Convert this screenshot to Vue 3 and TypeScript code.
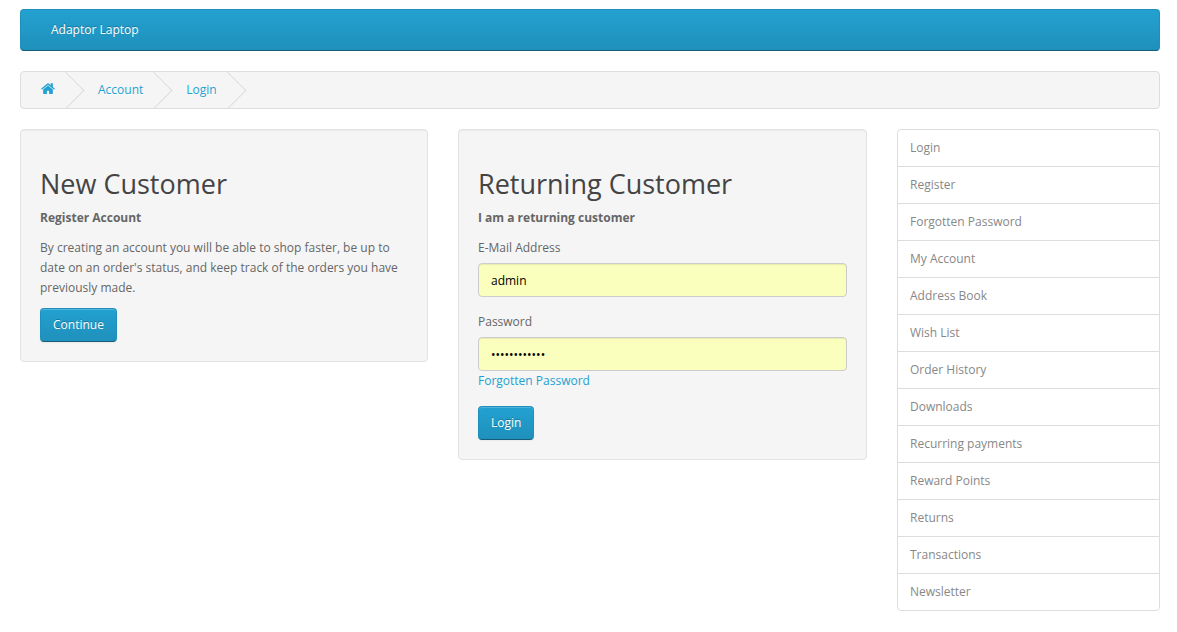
<script setup lang="ts">
import { ref } from 'vue'

const email = ref('admin')
const password = ref('admin1234567')
const links: string[] = [
  'Login', 'Register', 'Forgotten Password', 'My Account', 'Address Book',
  'Wish List', 'Order History', 'Downloads', 'Recurring payments',
  'Reward Points', 'Returns', 'Transactions', 'Newsletter',
]
</script>

<template>
  <div class="page">
    <nav class="menu" aria-label="Categories">
      <a href="#">Adaptor Laptop</a>
    </nav>

    <nav class="crumbs" aria-label="Breadcrumb">
      <a href="#" class="crumb home" aria-label="Home">
        <svg viewBox="0 0 1664 1312" width="14" height="11" aria-hidden="true">
          <path fill="currentColor" d="M1408 768v480q0 26-19 45t-45 19H960V928H704v384H320q-26 0-45-19t-19-45V768q0-1 .5-3t.5-3l575-474 575 474q1 2 1 6zm223-69l-62 74q-8 9-21 11h-3q-13 0-21-7L832 200 140 777q-12 8-24 7-13-2-21-11l-62-74q-8-10-7-23.500t11-21.500L756 55q32-26 76-26t76 26l244 204V64q0-14 9-23t23-9h192q14 0 23 9t9 23v408l219 182q10 8 11 21.500t-7 23.500z" />
        </svg>
      </a>
      <a href="#" class="crumb">Account</a>
      <a href="#" class="crumb">Login</a>
    </nav>

    <div class="row">
      <main class="content">
        <section class="well">
          <h2>New Customer</h2>
          <p><strong>Register Account</strong></p>
          <p>By creating an account you will be able to shop faster, be up to date on an order's status, and keep track of the orders you have previously made.</p>
          <button type="button" class="btn">Continue</button>
        </section>
        <section class="well">
          <h2>Returning Customer</h2>
          <p><strong>I am a returning customer</strong></p>
          <form @submit.prevent>
            <div class="group">
              <label for="email">E-Mail Address</label>
              <input id="email" v-model="email" type="text">
            </div>
            <div class="group">
              <label for="password">Password</label>
              <input id="password" v-model="password" type="password">
              <a href="#" class="forgot">Forgotten Password</a>
            </div>
            <button type="submit" class="btn">Login</button>
          </form>
        </section>
      </main>
      <aside class="list">
        <a v-for="link in links" :key="link" href="#">{{ link }}</a>
      </aside>
    </div>
  </div>
</template>

<style>
body {
  background: #fff;
}
</style>

<style scoped>
.page, .page * {
  box-sizing: border-box;
}
.page {
  padding: 9px 17px 20px 20px;
  color: #666;
  font: 400 12px/20px "Open Sans", sans-serif;
}
a {
  color: #23a1d1;
  text-decoration: none;
}
.menu {
  display: flex;
  padding: 0 15px;
  margin-bottom: 20px;
  border: 1px solid;
  border-color: #1f90bb #1f90bb #145e7a;
  border-radius: 4px;
  background: linear-gradient(to bottom, #23a1d1, #1f90bb);
}
.menu a {
  padding: 10px 15px;
  color: #fff;
  text-shadow: 0 -1px 0 rgba(0, 0, 0, 0.25);
}
.crumbs {
  display: flex;
  height: 38px;
  margin-bottom: 20px;
  overflow: hidden;
  border: 1px solid #ddd;
  border-radius: 4px;
  background: #f5f5f5;
}
.crumb {
  position: relative;
  padding: 8px 11px 8px 32px;
  text-shadow: 0 1px 0 #fff;
}
.crumb.home {
  padding-left: 20px;
}
.crumb svg {
  display: block;
  margin-top: 3px;
}
.crumb::after {
  content: "";
  position: absolute;
  top: 5px;
  right: -13px;
  width: 26px;
  height: 26px;
  border-top: 1px solid #ddd;
  border-right: 1px solid #ddd;
  transform: rotate(45deg);
  pointer-events: none;
}
.row {
  display: grid;
  grid-template-columns: minmax(0, 847fr) minmax(0, 263fr);
  gap: 30px;
  align-items: start;
}
.content {
  display: grid;
  grid-template-columns: minmax(0, 408fr) minmax(0, 409fr);
  gap: 30px;
  align-items: start;
}
.well {
  padding: 19px;
  border: 1px solid #e3e3e3;
  border-radius: 4px;
  background: #f5f5f5;
  box-shadow: inset 0 1px 1px rgba(0, 0, 0, 0.05);
}
h2 {
  margin: 20px 0 9px;
  color: #444;
  font-weight: 400;
  font-size: 27px;
  line-height: 30px;
}
p {
  margin: 0 0 10px;
}
strong {
  font-weight: 700;
}
.btn {
  display: block;
  padding: 6px 12px;
  border: 1px solid;
  border-color: #1f90bb #1f90bb #145e7a;
  border-radius: 4px;
  background: linear-gradient(to bottom, #23a1d1, #1f90bb);
  box-shadow: inset 0 1px 0 rgba(255, 255, 255, 0.2), 0 1px 2px rgba(0, 0, 0, 0.05);
  color: #fff;
  font: inherit;
  text-shadow: 0 -1px 0 rgba(0, 0, 0, 0.25);
}
.group {
  margin-bottom: 15px;
}
label {
  display: block;
  margin-bottom: 5px;
}
input {
  display: block;
  width: 100%;
  height: 34px;
  padding: 6px 12px;
  border: 1px solid #ccc;
  border-radius: 4px;
  background: #faffbd;
  box-shadow: inset 0 1px 1px rgba(0, 0, 0, 0.075);
  color: #000;
  font: inherit;
}
.forgot {
  display: block;
}
.list {
  display: flex;
  flex-direction: column;
  overflow: hidden;
  border: 1px solid #ddd;
  border-radius: 4px;
}
.list a {
  padding: 8px 12px;
  color: #888;
}
.list a + a {
  border-top: 1px solid #ddd;
}
</style>
